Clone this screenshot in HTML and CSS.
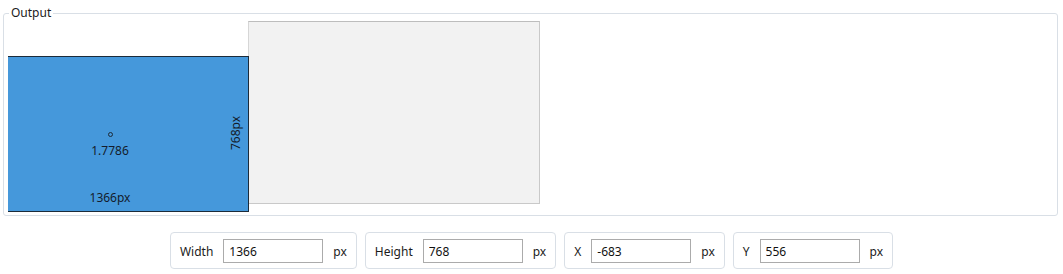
FILE: index.html
```html
<!DOCTYPE html>
<html>
<head>
<meta charset="utf-8">
<link rel="stylesheet" href="styles.css">
</head>
<body>
<fieldset class="output">
  <legend class="output-legend">Output</legend>
  <div class="canvas">
    <div class="screen screen-secondary"></div>
    <div class="screen screen-primary">
      <span class="center-dot"></span>
      <span class="ratio">1.7786</span>
      <span class="dim-width">1366px</span>
      <span class="dim-height">768px</span>
    </div>
  </div>
</fieldset>
<div class="controls">
  <div class="field">
    <span class="field-label">Width</span>
    <input class="field-input" type="text" value="1366">
    <span class="field-unit">px</span>
  </div>
  <div class="field">
    <span class="field-label">Height</span>
    <input class="field-input" type="text" value="768">
    <span class="field-unit">px</span>
  </div>
  <div class="field">
    <span class="field-label">X</span>
    <input class="field-input" type="text" value="-683">
    <span class="field-unit">px</span>
  </div>
  <div class="field">
    <span class="field-label">Y</span>
    <input class="field-input" type="text" value="556">
    <span class="field-unit">px</span>
  </div>
</div>
</body>
</html>
```

FILE: styles.css
```css
html, body {
  margin: 0;
  padding: 0;
  background: #ffffff;
}

body {
  font-family: "Noto Sans", "Open Sans", "Liberation Sans", sans-serif;
  font-size: 12px;
  color: #1b1b1b;
}

.output {
  margin: 6px 5px 0 3px;
  padding: 0;
  border: 1px solid #d9dfe6;
  border-radius: 3px;
  min-width: 0;
}

.output-legend {
  margin-left: 5px;
  padding: 0 2px;
  font-size: 12px;
  line-height: 14px;
  color: #1b1b1b;
}

.canvas {
  position: relative;
  height: 195px;
  overflow: hidden;
}

.screen {
  position: absolute;
  box-sizing: border-box;
}

.screen-secondary {
  left: 244px;
  top: 1px;
  width: 292px;
  height: 183px;
  background: #f2f2f2;
  border: 1px solid #c9c9c9;
  border-top-color: #bdbdbd;
  border-left-color: #d6d6d6;
}

.screen-primary {
  left: 4px;
  top: 36px;
  width: 241px;
  height: 156px;
  background: #4598db;
  border: 1px solid #1c2b3a;
  border-left: none;
}

.center-dot {
  position: absolute;
  left: 100px;
  top: 75px;
  width: 3px;
  height: 3px;
  border: 1px solid #1c2b3a;
  border-radius: 50%;
}

.ratio,
.dim-width,
.dim-height {
  position: absolute;
  line-height: 14px;
  white-space: nowrap;
  color: #141c2b;
}

.ratio {
  left: 102px;
  top: 87px;
  transform: translateX(-50%);
}

.dim-width {
  left: 102px;
  top: 134px;
  transform: translateX(-50%);
}

.dim-height {
  left: 228px;
  top: 76px;
  transform: translate(-50%, -50%) rotate(-90deg);
}

.controls {
  display: flex;
  justify-content: center;
  gap: 8px;
  margin-top: 16px;
}

.field {
  display: flex;
  align-items: center;
  box-sizing: border-box;
  height: 37px;
  padding: 1px 9px 0 9px;
  border: 1px solid #d9dfe6;
  border-radius: 4px;
}

.field-label {
  margin-right: 10px;
  color: #1b1b1b;
}

.field-input {
  box-sizing: border-box;
  width: 100px;
  height: 24px;
  margin: 0;
  padding: 0 5px;
  border: 1px solid #ababab;
  border-radius: 0;
  font-family: inherit;
  font-size: 12px;
  color: #111111;
  background: #ffffff;
  outline: none;
}

.field-unit {
  margin-left: 10px;
  color: #1b1b1b;
}
```
